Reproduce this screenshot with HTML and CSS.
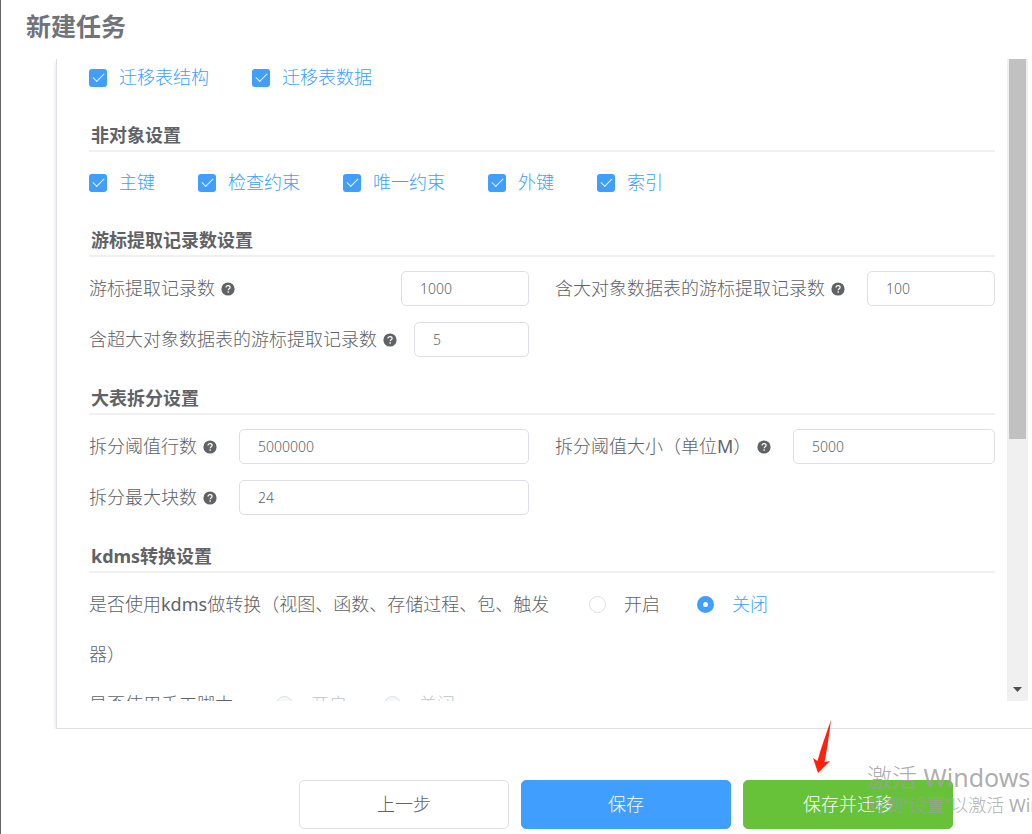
FILE: index.html
```html
<!DOCTYPE html>
<html lang="zh-CN">
<head>
<meta charset="utf-8">
<title>新建任务</title>
<link rel="stylesheet" href="styles.css">
</head>
<body>
<svg class="defs" aria-hidden="true">
  <symbol id="help" viewBox="0 0 14 14">
    <circle cx="7" cy="7" r="6.6" fill="#606266"/>
    <path d="M5 5.6C5 4.3 5.8 3.600 7 3.600s2.100.7 2.100 1.800C9.100 6.800 7.200 6.800 7.200 8.300" fill="none" stroke="#fff" stroke-width="1.2"/>
    <rect x="6.500" y="9.300" width="1.400" height="1.400" fill="#fff"/>
  </symbol>
</svg>
<div class="page">
  <h1 class="title">新建任务</h1>
  <main class="panel">
    <div class="scroll">
      <form class="content">
        <section class="section">
          <div class="checks">
            <label class="check"><input type="checkbox" checked>迁移表结构</label>
            <label class="check"><input type="checkbox" checked>迁移表数据</label>
          </div>
        </section>
        <section class="section">
          <h2 class="heading">非对象设置</h2>
          <div class="checks">
            <label class="check"><input type="checkbox" checked>主键</label>
            <label class="check"><input type="checkbox" checked>检查约束</label>
            <label class="check"><input type="checkbox" checked>唯一约束</label>
            <label class="check"><input type="checkbox" checked>外键</label>
            <label class="check"><input type="checkbox" checked>索引</label>
          </div>
        </section>
        <section class="section">
          <h2 class="heading">游标提取记录数设置</h2>
          <div class="fields">
            <div class="field"><label class="label label-wide" for="fetch">游标提取记录数<svg class="help"><use href="#help"/></svg></label><input class="input" id="fetch" type="text" value="1000"></div>
            <div class="field"><label class="label label-wide" for="lob">含大对象数据表的游标提取记录数<svg class="help"><use href="#help"/></svg></label><input class="input" id="lob" type="text" value="100"></div>
            <div class="field"><label class="label label-widest" for="biglob">含超大对象数据表的游标提取记录数<svg class="help"><use href="#help"/></svg></label><input class="input" id="biglob" type="text" value="5"></div>
          </div>
        </section>
        <section class="section">
          <h2 class="heading">大表拆分设置</h2>
          <div class="fields">
            <div class="field"><label class="label label-narrow" for="rows">拆分阈值行数<svg class="help"><use href="#help"/></svg></label><input class="input" id="rows" type="text" value="5000000"></div>
            <div class="field"><label class="label label-mid" for="size"><span>拆分阈值大小（单位<span class="latin">M</span>）</span><svg class="help"><use href="#help"/></svg></label><input class="input" id="size" type="text" value="5000"></div>
            <div class="field"><label class="label label-narrow" for="blocks">拆分最大块数<svg class="help"><use href="#help"/></svg></label><input class="input" id="blocks" type="text" value="24"></div>
          </div>
        </section>
        <section class="section section-radios">
          <h2 class="heading">kdms转换设置</h2>
          <div class="choice" role="radiogroup" aria-labelledby="kdms">
            <span class="choice-label" id="kdms">是否使用<span class="latin">kdms</span>做转换（视图、函数、存储过程、包、触发器）</span>
            <label class="radio"><input type="radio" name="kdms">开启</label>
            <label class="radio"><input type="radio" name="kdms" checked>关闭</label>
          </div>
          <div class="choice" role="radiogroup" aria-labelledby="script">
            <span class="choice-label choice-label-short" id="script">是否使用手工脚本</span>
            <label class="radio"><input type="radio" name="script" disabled>开启</label>
            <label class="radio"><input type="radio" name="script" disabled>关闭</label>
          </div>
        </section>
      </form>
      <div class="scrollbar"><div class="thumb"></div><svg class="down" viewBox="0 0 9 5"><path d="M0 0h9L4.500 5z" fill="#505050"/></svg></div>
    </div>
  </main>
  <footer class="footer">
    <button class="btn" type="button">上一步</button>
    <button class="btn btn-primary" type="button">保存</button>
    <button class="btn btn-success" type="button">保存并迁移</button>
  </footer>
  <svg class="arrow" viewBox="0 0 19 54"><path d="M18 0C16 16 14 30 11.500 42L17 41 5 53 0 38l4.500 3C8 28 13 14 18 0z" fill="#ff2010"/></svg>
  <div class="watermark"><p class="mark-title">激活 <span class="latin">Windows</span></p><p class="mark-text">转到“设置”以激活 <span class="latin">Windows</span>。</p></div>
</div>
</body>
</html>
```
FILE: styles.css
```css
* { box-sizing: border-box; }
body {
  margin: 0;
  background: #fff;
  color: #606266;
  font: 300 18px "Noto Sans", "Noto Sans CJK SC", sans-serif;
}
.defs { position: absolute; width: 0; height: 0; }
.latin { font-weight: 400; }
.page {
  position: relative;
  display: flex;
  flex-direction: column;
  height: 100vh;
  border-left: 1px solid #606266;
  overflow: hidden;
}
.title {
  margin: 0;
  padding: 6px 25px 13px;
  font-size: 25px;
  line-height: 40px;
  font-weight: 700;
  color: #707379;
}
.panel {
  flex: 1;
  min-height: 0;
  display: flex;
  margin-left: 55px;
  padding-bottom: 27px;
  border-left: 1px solid #dcdfe6;
  border-bottom: 1px solid #dcdfe6;
  box-shadow: -2px 2px 4px -2px rgba(0, 0, 0, 0.15);
  clip-path: inset(0 0 0 -6px);
}
.scroll { flex: 1; display: flex; overflow: hidden; padding-right: 4px; }
.content { flex: 1; min-width: 0; padding: 2px 12px 0 32px; }
.section { margin-bottom: 28px; }
.heading {
  margin: 0 0 14px;
  padding: 0 2px 1px;
  border-bottom: 2px solid #f0f0f0;
  font-size: 18px;
  line-height: 27px;
  font-weight: 700;
}
.checks { display: flex; gap: 43px; }
.check {
  display: flex;
  align-items: center;
  gap: 12px;
  line-height: 33px;
  color: #409eff;
}
.check input {
  appearance: none;
  width: 18px;
  height: 18px;
  margin: 0;
  display: grid;
  place-items: center;
  border-radius: 3px;
  background: #409eff;
}
.check input::after {
  content: "";
  width: 10px;
  height: 5px;
  margin-bottom: 3px;
  border: solid #e8f3ff;
  border-width: 0 0 1px 1px;
  rotate: -45deg;
}
.fields { display: grid; grid-template-columns: 1fr 1fr; gap: 16px 26px; }
.field { display: flex; min-width: 0; }
.label {
  flex: none;
  display: flex;
  align-items: center;
  gap: 6px;
  line-height: 35px;
  white-space: nowrap;
}
.label-narrow { width: 150px; }
.label-mid { width: 238px; }
.label-wide { width: 312px; }
.label-widest { width: 325px; }
.help { width: 14px; height: 14px; flex: none; }
.input {
  flex: 1;
  min-width: 0;
  height: 35px;
  padding: 0 18px;
  border: 1px solid #dcdfe6;
  border-radius: 5px;
  background: #fff;
  color: #606266;
  font: inherit;
  font-size: 14px;
}
.section-radios .heading { margin-bottom: 6px; }
.choice { display: flex; gap: 37px; line-height: 50px; }
.choice-label { width: 463px; }
.choice-label-short { width: 150px; }
.radio { display: flex; height: 50px; align-items: center; gap: 18px; }
.radio input {
  appearance: none;
  width: 17px;
  height: 17px;
  margin: 0;
  border: 1px solid #dcdfe6;
  border-radius: 50%;
}
.radio input:checked { border: 6px solid #409eff; }
.radio:has(:checked) { color: #409eff; }
.radio input:disabled { background: #f5f7fa; }
.radio:has(:disabled) { color: #c0c4cc; }
.scrollbar {
  width: 21px;
  padding: 0 2px 9px;
  display: flex;
  flex-direction: column;
  justify-content: space-between;
  align-items: center;
  background: #f0f0f0;
}
.thumb { width: 17px; height: 60%; background: #c1c1c1; }
.down { width: 9px; height: 5px; }
.footer { display: flex; gap: 12px; padding: 51px 0 5px 298px; }
.btn {
  width: 210px;
  height: 49px;
  padding: 0 0 3px;
  border: 1px solid #dcdfe6;
  border-radius: 5px;
  background: #fff;
  color: #606266;
  font: inherit;
}
.btn-primary { background: #409eff; border-color: #409eff; color: #fff; }
.btn-success { background: #67c23a; border-color: #67c23a; color: #fff; }
.arrow { position: absolute; right: 200px; bottom: 60px; width: 19px; height: 54px; }
.watermark {
  position: absolute;
  right: 0;
  bottom: 16px;
  width: 165px;
  overflow: hidden;
  white-space: nowrap;
  color: rgba(160, 160, 160, 0.85);
  pointer-events: none;
}
.watermark p { margin: 0; }
.mark-title { font-size: 25px; line-height: 30px; }
.mark-text { font-size: 18px; line-height: 26px; }
```
